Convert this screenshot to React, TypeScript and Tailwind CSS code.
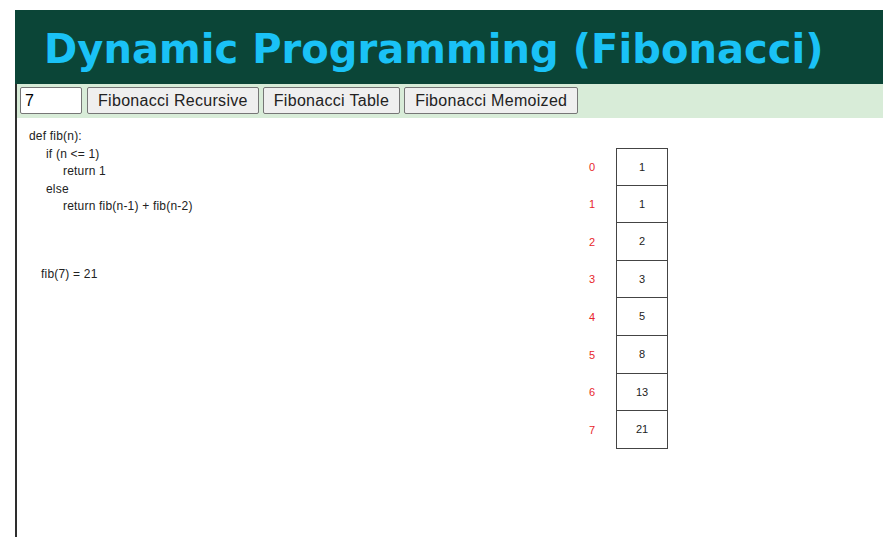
import { useState } from 'react';

const fibTable = (n: number) => {
  const t = [1, 1];
  for (let i = 2; i <= n; i++) t.push(t[i - 1] + t[i - 2]);
  return t.slice(0, n + 1);
};

export default function App() {
  const [n, setN] = useState('7');
  const num = Math.max(1, parseInt(n) || 0);
  const table = fibTable(num);

  return (
    <div className="pl-[15px] pt-[10px] font-['Liberation_Sans',Arial,sans-serif] bg-white h-[537px] overflow-hidden">
      <div className="h-[74px] bg-[#0b4537] flex items-center pl-[29px]">
        <h1 className="font-['DejaVu_Sans',Verdana,sans-serif] font-bold text-[40px] tracking-[0.05px] leading-none text-[#1ac2f6] mt-[4px]">
          Dynamic Programming (Fibonacci)
        </h1>
      </div>
      <div className="border-l-2 border-[#2e2e2e] h-[463px]">
        <div className="bg-[#d8ecd8] h-[34px] flex items-start gap-[4px] pl-[3px] pt-[3px]">
          <input
            value={n}
            onChange={(e) => setN(e.target.value)}
            className="w-[62px] h-[27px] border border-[#767676] rounded-[2px] bg-white px-[4px] text-[16px] text-black outline-none"
          />
          <button className="ml-[1px] h-[27px] px-[10px] border border-[#767676] rounded-[2px] bg-[#efefef] text-[16px] tracking-[0.3px] text-[#222]">
            Fibonacci Recursive
          </button>
          <button className="h-[27px] px-[10px] border border-[#767676] rounded-[2px] bg-[#efefef] text-[16px] tracking-[0.3px] text-[#222]">
            Fibonacci Table
          </button>
          <button className="h-[27px] px-[10px] border border-[#767676] rounded-[2px] bg-[#efefef] text-[16px] tracking-[0.3px] text-[#222]">
            Fibonacci Memoized
          </button>
        </div>

        <div className="flex">
          <div className="w-[560px] pl-[12px] pt-[10px] text-[12px] tracking-[0.2px] text-[#222] leading-[17.5px]">
            <div>def fib(n):</div>
            <div className="pl-[17px]">if (n &lt;= 1)</div>
            <div className="pl-[34px]">return 1</div>
            <div className="pl-[17px]">else</div>
            <div className="pl-[34px]">return fib(n-1) + fib(n-2)</div>
            <div className="pl-[12px] mt-[50px]">fib({num}) = {table[table.length - 1]}</div>
          </div>

          <div className="pt-[30px] flex flex-col">
            {table.map((v, i) => (
              <div key={i} className="flex items-stretch">
                <div className="w-[39px] pr-[9px] flex items-center justify-center text-[11px] text-[#e8262b]">{i}</div>
                <div
                  className={`w-[52px] h-[37.6px] border border-[#444] ${i > 0 ? 'border-t-0 h-[36.6px]' : ''} flex items-center justify-center text-[11px] text-[#222]`}
                >
                  {v}
                </div>
              </div>
            ))}
          </div>
        </div>
      </div>
    </div>
  );
}
